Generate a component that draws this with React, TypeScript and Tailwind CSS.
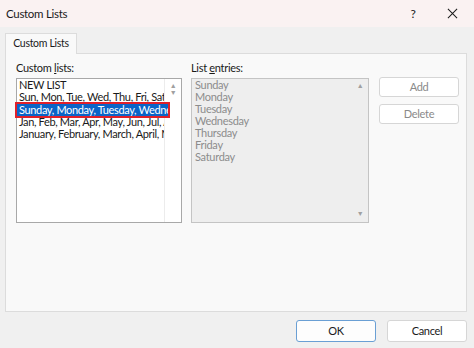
import React from 'react';

const lists = [
    'NEW LIST',
    'Sun, Mon, Tue, Wed, Thu, Fri, Sat',
    'Sunday, Monday, Tuesday, Wednesday, Thursday, Friday, Saturday',
    'Jan, Feb, Mar, Apr, May, Jun, Jul, Aug, Sep, Oct, Nov, Dec',
    'January, February, March, April, May, June, July, August',
];

const entries = ['Sunday', 'Monday', 'Tuesday', 'Wednesday', 'Thursday', 'Friday', 'Saturday'];

const ScrollBar = () => (
    <div className="w-[16px] flex flex-col justify-between items-center pt-[3px] pb-[5px] text-[#a0a0a0] text-[7px] leading-none">
        <span>▲</span>
        <span>▼</span>
    </div>
);

const App: React.FC = () => {
    return (
        <div className="w-[474px] h-[348px] flex flex-col bg-[#f0f0f0] text-[#1a1a1a] overflow-hidden tracking-[-0.3px]" style={{ fontFamily: 'Lato, "Noto Sans", sans-serif' }}>
            {/* Title bar */}
            <div className="h-[27px] flex items-center bg-[#faf2f2] pl-[6px]">
                <span className="text-[11.5px] flex-1">Custom Lists</span>
                <span className="text-[12px] w-[20px] text-center mr-[24px]">?</span>
                <svg width="11" height="11" viewBox="0 0 12 12" className="mr-[16px]">
                    <path d="M1 1 L11 11 M11 1 L1 11" stroke="#1a1a1a" strokeWidth="1.1" />
                </svg>
            </div>

            {/* Tabs */}
            <div className="flex-1 flex flex-col pl-[5px] pr-[7px] pt-[6px]">
                <div className="flex">
                    <div className="h-[21px] w-[72px] bg-[#f9f9f9] border border-b-0 border-[#dcdcdc] text-[10.5px] flex items-center justify-center -mb-px relative">
                        Custom Lists
                    </div>
                </div>
                <div className="h-[259px] bg-[#f9f9f9] border border-[#dcdcdc] flex pl-[10px] pt-[7px] gap-[9px]">
                    {/* Custom lists */}
                    <div className="flex flex-col">
                        <div className="text-[11px] h-[17px] leading-[14px]">Custom <span className="underline">l</span>ists:</div>
                        <div className="w-[166px] h-[145px] bg-white border border-[#a8a8a8] flex">
                            <div className="flex-1 min-w-0 pt-[0px] text-[11px] leading-[12.3px] tracking-[-0.35px]">
                                {lists.map((l, i) => (
                                    <div
                                        key={i}
                                        className={
                                            i === 2
                                                ? 'whitespace-nowrap overflow-hidden bg-[#0a64c8] text-white ring-2 ring-[#e0202a] pl-[2px] -mr-[4px] relative z-10'
                                                : 'whitespace-nowrap overflow-hidden pl-[2px]'
                                        }
                                    >
                                        {l}
                                    </div>
                                ))}
                            </div>
                            <div className="border-l border-[#ececec]">
                                <ScrollBar />
                            </div>
                        </div>
                    </div>

                    {/* List entries */}
                    <div className="flex flex-col">
                        <div className="text-[11px] h-[17px] leading-[14px]">List <span className="underline">e</span>ntries:</div>
                        <div className="w-[178px] h-[145px] bg-[#eeeeee] border border-[#c4c4c4] flex">
                            <div className="flex-1 pl-[3px] text-[11px] leading-[12px] text-[#8c8c8c]">
                                {entries.map((e) => (
                                    <div key={e}>{e}</div>
                                ))}
                            </div>
                            <ScrollBar />
                        </div>
                    </div>

                    {/* Buttons */}
                    <div className="flex flex-col gap-[7px] pt-[16px] ml-[1px]">
                        <button className="w-[80px] h-[20px] bg-white border border-[#d6d6d6] rounded-[3px] text-[11px] text-[#8a8a8a]">Add</button>
                        <button className="w-[80px] h-[20px] bg-white border border-[#d6d6d6] rounded-[3px] text-[11px] text-[#8a8a8a]">Delete</button>
                    </div>
                </div>

                {/* Footer */}
                <div className="flex justify-end gap-[11px] pt-[8px]">
                    <button className="w-[80px] h-[22px] bg-[#fdfdfd] border border-[#6a9fd4] rounded-[3px] text-[11px]">OK</button>
                    <button className="w-[80px] h-[22px] bg-white border border-[#d6d6d6] rounded-[3px] text-[11px]">Cancel</button>
                </div>
            </div>
        </div>
    );
};

export default App;
